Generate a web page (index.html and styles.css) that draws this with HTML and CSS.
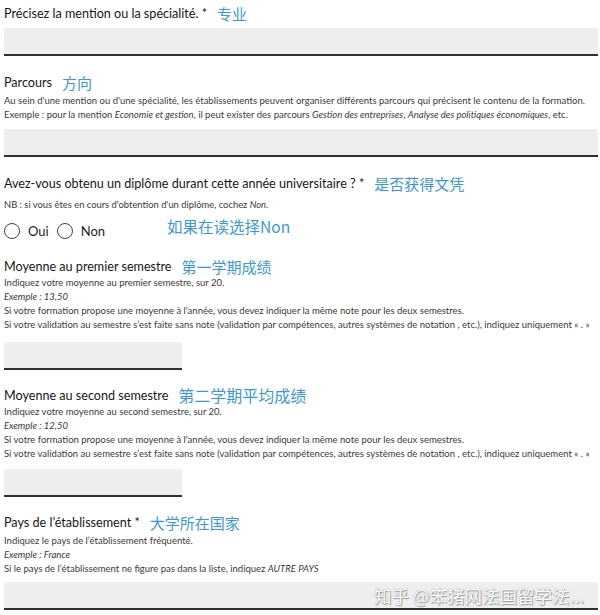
FILE: index.html
```html
<!DOCTYPE html>
<html lang="fr">
<head>
<meta charset="utf-8">
<link rel="stylesheet" href="styles.css">
</head>
<body>
<div class="form">
  <div class="field f1">
    <div class="label">Précisez la mention ou la spécialité. * <span class="zh">专业</span></div>
    <div class="input full"></div>
  </div>

  <div class="field f2">
    <div class="label">Parcours <span class="zh">方向</span></div>
    <div class="help">
      <p>Au sein d'une mention ou d'une spécialité, les établissements peuvent organiser différents parcours qui précisent le contenu de la formation.</p>
      <p>Exemple : pour la mention <i>Economie et gestion</i>, il peut exister des parcours <i>Gestion des entreprises</i>, <i>Analyse des politiques économiques</i>, etc.</p>
    </div>
    <div class="input full"></div>
  </div>

  <div class="field f3">
    <div class="label">Avez-vous obtenu un diplôme durant cette année universitaire ? * <span class="zh">是否获得文凭</span></div>
    <div class="nb">NB : si vous êtes en cours d'obtention d'un diplôme, cochez <i>Non</i>.</div>
    <div class="radios">
      <span class="radio"><span class="circle"></span>Oui</span>
      <span class="radio"><span class="circle"></span>Non</span>
      <span class="zh note">如果在读选择Non</span>
    </div>
  </div>

  <div class="field f4">
    <div class="label">Moyenne au premier semestre <span class="zh">第一学期成绩</span></div>
    <div class="help">
      <p>Indiquez votre moyenne au premier semestre, sur 20.</p>
      <p><i>Exemple : 13,50</i></p>
      <p>Si votre formation propose une moyenne à l'année, vous devez indiquer la même note pour les deux semestres.</p>
      <p>Si votre validation au semestre s’est faite sans note (validation par compétences, autres systèmes de notation , etc.), indiquez uniquement « . »</p>
    </div>
    <div class="input short"></div>
  </div>

  <div class="field f5">
    <div class="label">Moyenne au second semestre <span class="zh big">第二学期平均成绩</span></div>
    <div class="help">
      <p>Indiquez votre moyenne au second semestre, sur 20.</p>
      <p><i>Exemple : 12,50</i></p>
      <p>Si votre formation propose une moyenne à l'année, vous devez indiquer la même note pour les deux semestres.</p>
      <p>Si votre validation au semestre s’est faite sans note (validation par compétences, autres systèmes de notation , etc.), indiquez uniquement « . »</p>
    </div>
    <div class="input short"></div>
  </div>

  <div class="field f6">
    <div class="label">Pays de l’établissement * <span class="zh">大学所在国家</span></div>
    <div class="help">
      <p>Indiquez le pays de l’établissement fréquenté.</p>
      <p><i>Exemple : France</i></p>
      <p>Si le pays de l’établissement ne figure pas dans la liste, indiquez <i>AUTRE PAYS</i></p>
    </div>
    <div class="input full last">
      <span class="watermark">知乎 @笨猪网法国留学法...</span>
    </div>
  </div>
</div>
</body>
</html>
```

FILE: styles.css
```css
html, body {
  margin: 0;
  padding: 0;
  background: #ffffff;
}
body {
  font-family: Lato, "Liberation Sans", sans-serif;
  color: #1e1e1e;
  overflow: hidden;
}
.form {
  padding: 0 2px 0 4px;
}
.field {
  display: flex;
  flex-direction: column;
}
.label {
  font-size: 12.6px;
  line-height: 18px;
  color: #161616;
  display: flex;
  align-items: center;
  white-space: nowrap;
}
.zh {
  font-family: "Noto Sans CJK SC", sans-serif;
  font-weight: 400;
  color: #3a98d6;
  font-size: 15px;
  margin-left: 10px;
}
.zh.big {
  font-size: 16px;
  position: relative;
  top: -1px;
}
.help {
  font-size: 9.5px;
  line-height: 14px;
  color: #3a3a3a;
}
.help p {
  margin: 0;
  white-space: nowrap;
}
.nb {
  font-size: 9.4px;
  line-height: 12px;
  color: #3a3a3a;
  margin-top: 6px;
}
.input {
  background: #eeeeee;
  height: 26px;
  border-bottom: 2px solid #303030;
  border-radius: 2px 2px 0 0;
  box-sizing: content-box;
}
.full { width: 594px; }
.short { width: 178px; }
.f1 { padding-top: 5px; }
.f1 .input { margin-top: 5px; }
.f2 { padding-top: 18px; }
.f2 .label { margin-bottom: 2px; }
.f2 .input { margin-top: 7px; }
.f3 { padding-top: 18px; }
.radios {
  display: flex;
  align-items: center;
  margin-top: 9px;
  font-size: 13px;
}
.radio {
  display: flex;
  align-items: center;
  margin-right: 8px;
}
.circle {
  width: 16px;
  height: 16px;
  border: 1.4px solid #444;
  border-radius: 50%;
  margin-right: 8px;
  box-sizing: border-box;
}
.note {
  margin-left: 54px;
  font-size: 15.5px;
  position: relative;
  top: -5px;
}
.f4 { padding-top: 16px; }
.f4 .input { margin-top: 10px; }
.f5 .input { margin-top: 8px; }
.f5 { padding-top: 17px; }
.f6 { padding-top: 17px; }
.f6 .label { margin-bottom: 2px; }
.f6 .input { margin-top: 6px; }
.last {
  position: relative;
}
.watermark {
  position: absolute;
  right: 14px;
  top: 1px;
  font-family: "Noto Sans CJK SC", sans-serif;
  font-size: 17.5px;
  color: #ffffff;
  text-shadow: 0 0 1px #8a8a8a, 1px 1px 1px #9a9a9a;
  white-space: nowrap;
}
```
